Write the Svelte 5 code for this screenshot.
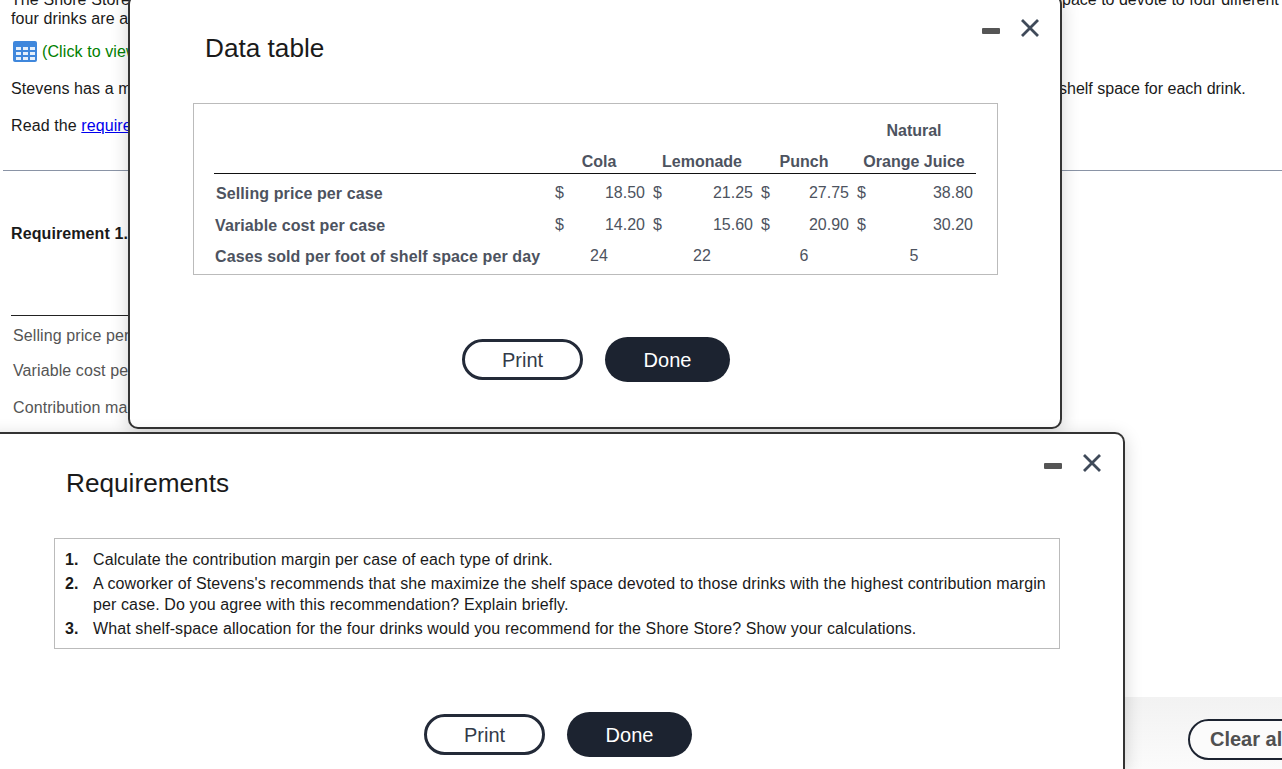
<script>
    const rows = [
        { label: 'Selling price per case', vals: ['18.50', '21.25', '27.75', '38.80'] },
        { label: 'Variable cost per case', vals: ['14.20', '15.60', '20.90', '30.20'] }
    ];
    const sold = ['24', '22', '6', '5'];
</script>

<div class="page">
    <div class="row first">
        <span>The Shore Store</span>
        <span class="right">pace to devote to four different</span>
    </div>
    <div class="row second"><span>four drinks are a</span></div>
    <div class="row link-row">
        <svg class="grid-icon" viewBox="0 0 24 21" width="24" height="21">
            <rect width="24" height="21" rx="2" fill="#3f87dc" />
            <g fill="#e6f0fb">
                {#each [6, 11, 16] as y}
                    {#each [3, 10, 17] as x}
                        <rect {x} {y} width="5" height="3" />
                    {/each}
                {/each}
            </g>
        </svg>
        <span class="green">(Click to view</span>
    </div>
    <div class="row third">
        <span>Stevens has a m</span>
        <span class="right shelf">shelf space for each drink.</span>
    </div>
    <div class="row fourth"><span>Read the <a href="#req">require</a></span></div>
    <hr class="divider" />
    <div class="row req"><b>Requirement 1.</b></div>
    <hr class="short-rule" />
    <div class="muted first-m">Selling price per</div>
    <div class="muted">Variable cost pe</div>
    <div class="muted last-m">Contribution ma</div>
</div>

<div class="footer">
    <button class="clear">Clear all</button>
</div>

<section class="win win-data">
    <header class="win-head">
        <h2>Data table</h2>
        <div class="win-tools">
            <span class="minimize"></span>
            <svg viewBox="0 0 20 20" width="20" height="20"><path d="M2 2 18 18M18 2 2 18" stroke="#3f4a59" stroke-width="2.8" fill="none" /></svg>
        </div>
    </header>
    <div class="table-box">
        <table>
            <colgroup>
                <col class="c-label" />
                <col class="c-d1" /><col class="c-v1" />
                <col class="c-d2" /><col class="c-v2" />
                <col class="c-d3" /><col class="c-v3" />
                <col class="c-d4" /><col class="c-v4" />
            </colgroup>
            <thead>
                <tr>
                    <th></th><th colspan="2"></th><th colspan="2"></th><th colspan="2"></th>
                    <th colspan="2">Natural</th>
                </tr>
                <tr class="head-row">
                    <th></th>
                    <th colspan="2">Cola</th>
                    <th colspan="2">Lemonade</th>
                    <th colspan="2">Punch</th>
                    <th colspan="2">Orange Juice</th>
                </tr>
            </thead>
            <tbody>
                {#each rows as r}
                    <tr>
                        <td class="lbl">{r.label}</td>
                        {#each r.vals as v}
                            <td class="dollar">$</td>
                            <td class="val">{v}</td>
                        {/each}
                    </tr>
                {/each}
                <tr>
                    <td class="lbl">Cases sold per foot of shelf space per day</td>
                    {#each sold as s}
                        <td class="mid" colspan="2">{s}</td>
                    {/each}
                </tr>
            </tbody>
        </table>
    </div>
    <div class="actions">
        <button class="btn-print">Print</button>
        <button class="btn-done">Done</button>
    </div>
</section>

<section class="win win-req">
    <header class="win-head">
        <h2>Requirements</h2>
        <div class="win-tools">
            <span class="minimize"></span>
            <svg viewBox="0 0 20 20" width="20" height="20"><path d="M2 2 18 18M18 2 2 18" stroke="#3f4a59" stroke-width="2.8" fill="none" /></svg>
        </div>
    </header>
    <ol class="req-box">
        <li><b>1.</b><span>Calculate the contribution margin per case of each type of drink.</span></li>
        <li><b>2.</b><span>A coworker of Stevens's recommends that she maximize the shelf space devoted to those drinks with the highest contribution margin per case. Do you agree with this recommendation? Explain briefly.</span></li>
        <li><b>3.</b><span>What shelf-space allocation for the four drinks would you recommend for the Shore Store? Show your calculations.</span></li>
    </ol>
    <div class="actions">
        <button class="btn-print">Print</button>
        <button class="btn-done">Done</button>
    </div>
</section>

<style>
    :global(body) {
        margin: 0;
        background: #fff;
        overflow: hidden;
        height: 769px;
        font-family: "Liberation Sans", Arial, sans-serif;
    }

    .page {
        height: 769px;
        font-size: 16px;
        letter-spacing: 0.1px;
        color: #1a1a1a;
        overflow: hidden;
    }

    .row {
        display: grid;
        grid-template-columns: 1051px 1fr;
        padding-left: 11px;
        white-space: nowrap;
        line-height: 20px;
    }

    .row .right {
        overflow: hidden;
        letter-spacing: 0;
    }

    .row .shelf { margin-left: -3px; }

    .first { margin-top: -10px; }
    .second { margin-top: -1px; }

    .link-row {
        display: flex;
        align-items: center;
        margin-top: 12px;
        padding-left: 13px;
    }

    .grid-icon { margin-right: 5px; }
    .green { color: #008000; }

    .third { margin-top: 17px; }
    .fourth { margin-top: 17px; }
    a { color: #0000ee; }

    .divider {
        margin: 34px 0 0 3px;
        border: 0;
        border-top: 1px solid #8a94a6;
    }

    .req { margin-top: 53px; }

    .short-rule {
        width: 140px;
        margin: 71px 0 0 11px;
        border: 0;
        border-top: 1px solid #222;
    }

    .muted {
        padding-left: 13px;
        color: #555;
        line-height: 20px;
        margin-top: 15px;
        white-space: nowrap;
    }

    .first-m { margin-top: 10px; }
    .last-m { margin-top: 17px; }

    .footer {
        position: absolute;
        left: 1125px;
        right: 0;
        top: 697px;
        height: 72px;
        overflow: hidden;
        background: linear-gradient(#f2f2f2, #fbfbfb);
    }

    .clear {
        position: absolute;
        left: 63px;
        top: 22px;
        width: 130px;
        height: 41px;
        border: 2px solid #1c2330;
        border-radius: 21px;
        background: #fbfbfb;
        color: #505050;
        font: bold 20px "Liberation Sans", Arial, sans-serif;
        text-align: left;
        padding: 0 0 0 20px;
        white-space: nowrap;
    }

    .win {
        position: absolute;
        box-sizing: border-box;
        background: #fff;
        border: 2px solid #333;
        border-radius: 10px;
        box-shadow: 0 4px 18px rgba(0, 0, 0, 0.18);
    }

    .win-data {
        left: 128px;
        top: -6px;
        width: 934px;
        height: 435px;
    }

    /* runs off the bottom of the page, so no lower edge shows */
    .win-req {
        left: -20px;
        top: 432px;
        width: 1145px;
        height: 337px;
        border-bottom: 0;
        border-radius: 10px 10px 0 0;
    }

    .win-head {
        position: relative;
    }

    .win-head h2 {
        margin: 0;
        font-size: 26.2px;
        font-weight: 400;
        line-height: 30px;
        color: #1a1a1a;
    }

    .win-data h2 { padding: 37px 0 0 75px; }
    .win-req h2 { padding: 34px 0 0 84px; }

    .win-tools {
        position: absolute;
        top: 22px;
        right: 20px;
        display: flex;
        align-items: center;
        gap: 20px;
    }

    .win-req .win-tools { top: 19px; right: 21px; }

    .minimize {
        width: 18px;
        height: 6px;
        margin-top: 6px;
        background: #555;
        border-radius: 1px;
    }

    .table-box {
        box-sizing: border-box;
        margin: 40px 0 0 63px;
        width: 805px;
        height: 172px;
        border: 1px solid #bbb;
        padding: 11px 20px 0;
    }

    table {
        border-collapse: collapse;
        table-layout: fixed;
        width: 762px;
        font-size: 16px;
        color: #4d5360;
    }

    th, td {
        box-sizing: border-box;
        padding: 0;
        height: 31px;
        white-space: nowrap;
    }

    th { font-weight: 700; text-align: center; }

    .head-row th {
        height: 27px;
        padding-top: 6px;
        border-bottom: 1px solid #111;
    }

    tbody tr:first-child td {
        height: 36px;
        padding-top: 3px;
    }

    .c-label { width: 336px; }
    .c-d1 { width: 20px; }
    .c-v1 { width: 78px; }
    .c-d2 { width: 20px; }
    .c-v2 { width: 88px; }
    .c-d3 { width: 20px; }
    .c-v3 { width: 76px; }
    .c-d4 { width: 20px; }
    .c-v4 { width: 104px; }

    .lbl {
        font-weight: 700;
        padding-left: 1px;
        padding-top: 2px;
        letter-spacing: 0.1px;
    }

    tbody tr:first-child td.lbl {
        padding-top: 6px;
        padding-left: 2px;
    }

    .dollar { padding-left: 5px; }
    .val { text-align: right; padding-right: 3px; }
    .mid { text-align: center; }

    .actions {
        display: flex;
        justify-content: center;
        align-items: center;
        gap: 22px;
    }

    .win-data .actions { margin-top: 62px; padding-left: 1px; }
    .win-req .actions { margin-top: 63px; padding-left: 10px; }

    button {
        font-family: "Liberation Sans", Arial, sans-serif;
        font-size: 20px;
        cursor: pointer;
        padding: 1px 0 0 1px;
    }

    .btn-print {
        box-sizing: border-box;
        width: 121px;
        height: 41px;
        background: #fff;
        color: #333b49;
        border: 3px solid #232a38;
        border-radius: 21px;
    }

    .btn-done {
        box-sizing: border-box;
        width: 125px;
        height: 45px;
        background: #1c2330;
        color: #fff;
        border: 0;
        border-radius: 23px;
    }

    .req-box {
        box-sizing: border-box;
        list-style: none;
        width: 1006px;
        height: 111px;
        margin: 40px 0 0 72px;
        padding: 10px 10px 0;
        border: 1px solid #bbb;
        font-size: 16px;
        letter-spacing: 0.11px;
        line-height: 21px;
        color: #1a1a1a;
    }

    .req-box li {
        display: grid;
        grid-template-columns: 28px 1fr;
        margin-bottom: 3px;
    }
</style>
